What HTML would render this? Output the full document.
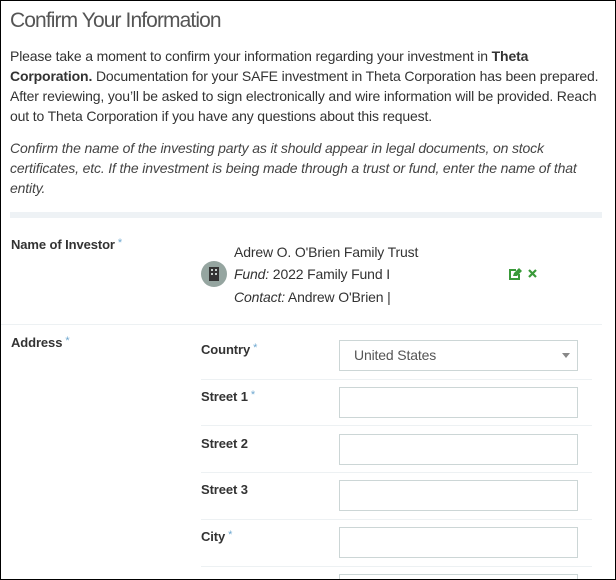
<!DOCTYPE html>
<html><head><style>
*{box-sizing:border-box;margin:0;padding:0}
html,body{width:616px;height:580px;overflow:hidden}
body{background:#fff;font-family:"Liberation Sans",sans-serif;color:#333;position:relative}
.frame{position:absolute;left:0;top:0;width:616px;height:580px;border:1px solid #000;z-index:5;pointer-events:none}
.a{position:absolute;white-space:nowrap}
.p{font-size:14px;letter-spacing:-0.15px;color:#333}
.lab{font-size:13px;font-weight:bold;color:#333;letter-spacing:-0.1px}
.star{color:#6fa8d0;font-weight:normal;font-size:11px;vertical-align:top;margin-left:3px}
.inp{position:absolute;left:339px;width:239px;height:31px;border:1px solid #ccd6d6;background:#fff}
.sep{position:absolute;left:201px;width:391px;height:1px;background:#edf1f3}
</style></head><body>
<div class="frame"></div>
<div class="a" style="left:10px;top:9px;font-size:21px;color:#555;letter-spacing:-0.9px">Confirm Your Information</div>
<div class="a p" style="left:10px;top:48px">Please take a moment to confirm your information regarding your investment in <b>Theta</b></div>
<div class="a p" style="left:10px;top:68px"><b>Corporation.</b> Documentation for your SAFE investment in Theta Corporation has been prepared.</div>
<div class="a p" style="left:10px;top:88px">After reviewing, you’ll be asked to sign electronically and wire information will be provided. Reach</div>
<div class="a p" style="left:10px;top:108px">out to Theta Corporation if you have any questions about this request.</div>
<div class="a p" style="left:10px;top:140px;font-style:italic;color:#444">Confirm the name of the investing party as it should appear in legal documents, on stock</div>
<div class="a p" style="left:10px;top:160px;font-style:italic;color:#444">certificates, etc. If the investment is being made through a trust or fund, enter the name of that</div>
<div class="a p" style="left:10px;top:180px;font-style:italic;color:#444">entity.</div>
<div class="a" style="left:10px;top:212px;width:592px;height:6px;background:#eef2f5"></div>

<div class="a lab" style="left:11px;top:237px">Name of Investor<span class="star">*</span></div>
<div class="a" style="left:201px;top:261px;width:26px;height:26px;border-radius:50%;background:#95a5a0"></div>
<svg class="a" style="left:209px;top:267px" width="10" height="14" viewBox="0 0 10 14"><rect x="0" y="0" width="10" height="14" fill="#333"/><g fill="#c8d0cd"><rect x="2" y="2" width="2" height="2"/><rect x="6" y="2" width="2" height="2"/><rect x="2" y="6" width="2" height="2"/><rect x="6" y="6" width="2" height="2"/></g></svg>
<div class="a p" style="left:234px;top:244px">Adrew O. O'Brien Family Trust</div>
<div class="a p" style="left:234px;top:266px"><i>Fund:</i> 2022 Family Fund I</div>
<div class="a p" style="left:234px;top:289px"><i>Contact:</i> Andrew O'Brien |</div>
<svg class="a" style="left:508px;top:266px" width="32" height="15" viewBox="0 0 32 15"><path d="M11 8v5H2V4h6" fill="none" stroke="#3a9a3a" stroke-width="2"/><path d="M5 10l1-3 5-5 3 3-5 5z" fill="#3a9a3a"/><path d="M21 4l7 7M28 4l-7 7" stroke="#3a9a3a" stroke-width="2.2"/></svg>
<div class="a" style="left:0;top:324px;width:602px;height:1px;background:#edf1f3"></div>

<div class="a lab" style="left:11px;top:335px">Address<span class="star">*</span></div>
<div class="a lab" style="left:201px;top:342px">Country<span class="star">*</span></div>
<div class="inp" style="top:340px"></div>
<div class="a p" style="left:354px;top:347px;color:#555">United States</div>
<div class="a" style="left:562px;top:353px;width:0;height:0;border-left:4px solid transparent;border-right:4px solid transparent;border-top:5px solid #888"></div>
<div class="sep" style="top:379px"></div>
<div class="a lab" style="left:201px;top:389px">Street 1<span class="star">*</span></div>
<div class="inp" style="top:387px"></div>
<div class="sep" style="top:425px"></div>
<div class="a lab" style="left:201px;top:436px">Street 2</div>
<div class="inp" style="top:434px"></div>
<div class="sep" style="top:472px"></div>
<div class="a lab" style="left:201px;top:482px">Street 3</div>
<div class="inp" style="top:480px"></div>
<div class="sep" style="top:519px"></div>
<div class="a lab" style="left:201px;top:529px">City<span class="star">*</span></div>
<div class="inp" style="top:527px"></div>
<div class="sep" style="top:566px"></div>
<div class="inp" style="top:574px;height:6px;border-bottom:none"></div>
</body></html>
